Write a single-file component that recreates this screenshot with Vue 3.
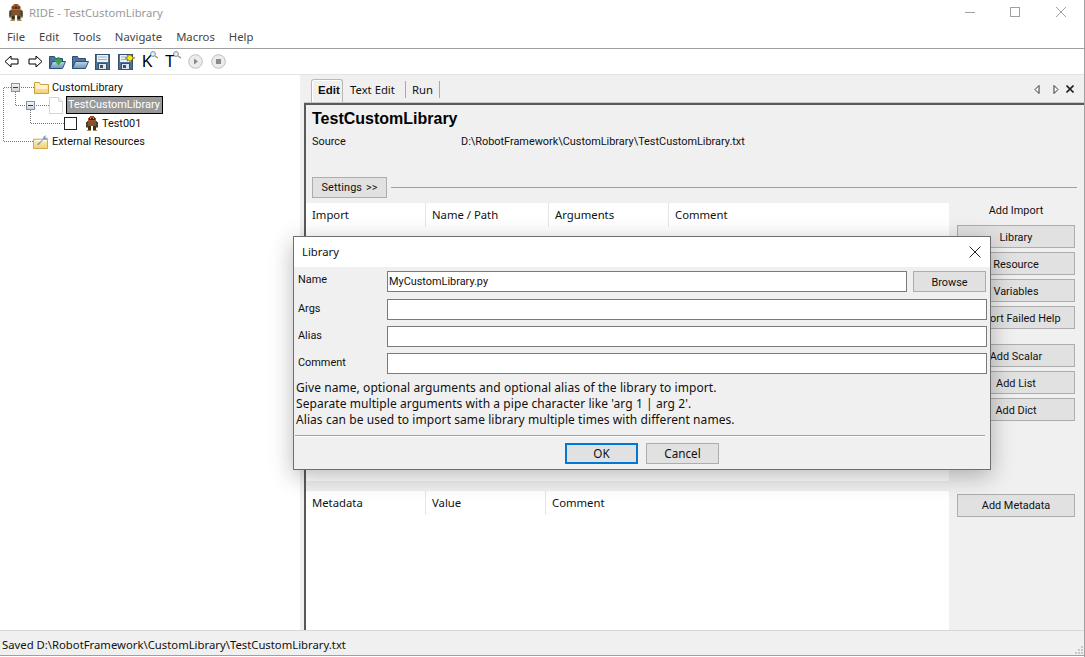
<script setup>
const menus = ['File', 'Edit', 'Tools', 'Navigate', 'Macros', 'Help']
const importButtons = ['Library', 'Resource', 'Variables', 'Import Failed Help']
const varButtons = ['Add Scalar', 'Add List', 'Add Dict']
const helpLines = [
  'Give name, optional arguments and optional alias of the library to import.',
  "Separate multiple arguments with a pipe character like 'arg 1 | arg 2'.",
  'Alias can be used to import same library multiple times with different names.'
]
</script>

<template>
  <div class="app">
    <svg width="0" height="0" class="defs">
      <defs>
        <linearGradient id="blueFolder" x1="0" y1="0" x2="0" y2="1">
          <stop offset="0" stop-color="#c4d6e6" />
          <stop offset="1" stop-color="#6d92b4" />
        </linearGradient>
        <linearGradient id="yellowFolder" x1="0" y1="0" x2="0" y2="1">
          <stop offset="0" stop-color="#fff3c4" />
          <stop offset="1" stop-color="#f4cf6c" />
        </linearGradient>
        <g id="robot">
          <path d="M5 0h4v1h1v1h1v3H3V2h1V1h1z" fill="#a8502c" />
          <path d="M4 2h6v2H4z" fill="#3a2414" />
          <path d="M5 2h1v1H5zM8 2h1v1H8z" fill="#d8a050" />
          <path d="M2 5h10v5H2z" fill="#6e5a34" />
          <path d="M5 6h4v3H5z" fill="#9b4a28" />
          <path d="M1 6h2v6H1zM11 6h2v6h-2z" fill="#4d4024" />
          <path d="M1 11h2v1H1zM11 11h2v1h-2z" fill="#b89a5a" />
          <path d="M3 10h3v4H3zM8 10h3v4H8z" fill="#3e2e1a" />
          <path d="M2 14h4v1H2zM8 14h4v1H8z" fill="#a88c50" />
        </g>
      </defs>
    </svg>

    <header class="titlebar">
      <svg class="robot title-robot" viewBox="0 0 14 15"><use href="#robot" /></svg>
      <span class="title-text">RIDE - TestCustomLibrary</span>
      <div class="winbtns">
        <svg width="10" height="10" viewBox="0 0 10 10"><path d="M0 5.500h10" stroke="#a0a0a0" fill="none" /></svg>
        <svg width="10" height="10" viewBox="0 0 10 10"><rect x=".5" y=".5" width="9" height="9" stroke="#a0a0a0" fill="none" /></svg>
        <svg class="win-x" width="10" height="10" viewBox="0 0 10 10"><path d="M0 0l10 10M10 0L0 10" stroke="#a0a0a0" fill="none" /></svg>
      </div>
    </header>

    <nav class="menubar">
      <span v-for="m in menus" :key="m" class="menu-item">{{ m }}</span>
    </nav>

    <div class="toolbar">
      <svg class="tool arrow" viewBox="0 0 15 13"><path d="M1 6.500L7 1v3h7v5H7v3z" fill="#fff" stroke="#000" /></svg>
      <svg class="tool arrow a2" viewBox="0 0 15 13"><path d="M14 6.500L8 1v3H1v5h7v3z" fill="#fff" stroke="#000" /></svg>
      <svg class="tool t3" viewBox="0 0 17 14">
        <path d="M.5 13.500V1.500h5l1 2h7v3" fill="#4f7698" stroke="#2a5077" />
        <path d="M.5 13.500l3-7h13l-3 7z" fill="url(#blueFolder)" stroke="#2a5077" />
        <path d="M9.500 2v5M6.500 5l3 4 3-4" stroke="#35a84a" stroke-width="2" fill="none" />
      </svg>
      <svg class="tool t4" viewBox="0 0 17 14">
        <path d="M.5 13.500V1.500h5l1 2h7v3" fill="#4f7698" stroke="#2a5077" />
        <path d="M.5 13.500l3-7h13l-3 7z" fill="url(#blueFolder)" stroke="#2a5077" />
      </svg>
      <svg class="tool t5" viewBox="0 0 15 16">
        <rect x=".5" y=".5" width="14" height="15" fill="#4f7192" stroke="#35536f" />
        <rect x="2" y="1" width="11" height="7" fill="#eef1f5" />
        <path d="M3 3h9M3 5.500h9" stroke="#9fb0c2" />
        <rect x="3.500" y="9.500" width="8" height="6" fill="#dfe6ee" stroke="#35536f" />
        <rect x="5" y="11" width="3" height="3" fill="#35536f" />
      </svg>
      <svg class="tool t6" viewBox="0 0 17 16">
        <rect x=".5" y=".5" width="14" height="15" fill="#4f7192" stroke="#35536f" />
        <rect x="2" y="1" width="11" height="7" fill="#eef1f5" />
        <path d="M3 3h9M3 5.500h9" stroke="#9fb0c2" />
        <rect x="3.500" y="9.500" width="8" height="6" fill="#dfe6ee" stroke="#35536f" />
        <rect x="5" y="11" width="3" height="3" fill="#35536f" />
        <path d="M12 0l1 2 2-1-1 2 3 1-3 1 1 2-2-1-1 2-1-2-2 1 1-2-3-1 3-1-1-2 2 1z" fill="#ffee00" stroke="#222" stroke-width=".4" />
      </svg>
      <span class="tool-letter l1">K<svg class="lens" viewBox="0 0 8 8"><circle cx="3" cy="3" r="2.400" fill="#e8f2fa" stroke="#6d8fac" /><path d="M5 5l3 2" stroke="#b08a4a" stroke-width="1.300" /></svg></span>
      <span class="tool-letter l2">T<svg class="lens" viewBox="0 0 8 8"><circle cx="3" cy="3" r="2.400" fill="#e8f2fa" stroke="#6d8fac" /><path d="M5 5l3 2" stroke="#b08a4a" stroke-width="1.300" /></svg></span>
      <svg class="tool round r1" viewBox="0 0 15 15">
        <circle cx="7.500" cy="7.500" r="6.800" fill="#ececec" stroke="#bdbdbd" />
        <path d="M6 4.500l4 3-4 3z" fill="#8a8a8a" />
      </svg>
      <svg class="tool round r2" viewBox="0 0 15 15">
        <circle cx="7.500" cy="7.500" r="6.800" fill="#ececec" stroke="#bdbdbd" />
        <rect x="5" y="5" width="5" height="5" fill="#8a8a8a" />
      </svg>
    </div>

    <main class="main">
      <aside class="tree">
        <svg class="tree-lines" width="100" height="80" shape-rendering="crispEdges">
          <path d="M3.500 12.500h8M3.500 12.500v54h30M15.500 16.500v14h11M30.500 34.500v14h34M19 12.500h15M34 30.500h15" stroke="#777" stroke-dasharray="1 1" fill="none" />
        </svg>
        <div class="tree-row row-root">
          <span class="expander"></span>
          <svg class="folder" viewBox="0 0 15 13"><path d="M.5 12.500v-11h5l1 2h8v9z" fill="url(#yellowFolder)" stroke="#c9a243" /><path d="M2 5h11M2 7h11" stroke="#fff" /></svg>
          <span class="node-label">CustomLibrary</span>
        </div>
        <div class="tree-row row-file">
          <span class="expander"></span>
          <svg class="file" viewBox="0 0 14 17"><path d="M.5.500h9l4 4v12H.5z" fill="#fff" stroke="#d4d4d4" /><path d="M9.500.500v4h4" fill="none" stroke="#d4d4d4" /></svg>
          <span class="node-label selected">TestCustomLibrary</span>
        </div>
        <div class="tree-row row-test">
          <span class="checkbox"></span>
          <svg class="robot" viewBox="0 0 14 15"><use href="#robot" /></svg>
          <span class="node-label">Test001</span>
        </div>
        <div class="tree-row row-ext">
          <svg class="folder-ext" viewBox="0 0 17 16"><path d="M.5 15.500v-10h15v10z" fill="url(#yellowFolder)" stroke="#c9a243" /><path d="M3 7h11" stroke="#fff" /><path d="M4 11l6-5 1-3 3-2-1 3 3 0-2 2-3 0-5 6z" fill="#8aa0b8" /></svg>
          <span class="node-label">External Resources</span>
        </div>
      </aside>

      <div class="sash"></div>

      <section class="notebook">
        <div class="tabs">
          <span class="tab active">Edit</span>
          <span class="tab t-text">Text Edit</span>
          <span class="tab t-run">Run</span>
          <div class="tab-nav">
            <svg class="nav-l" width="6" height="9" viewBox="0 0 6 9"><path d="M5 .500L1 4.500l4 4z" fill="#fff" stroke="#333" /></svg>
            <svg class="nav-r" width="6" height="9" viewBox="0 0 6 9"><path d="M1 .500l4 4-4 4z" fill="#fff" stroke="#333" /></svg>
            <svg class="nav-x" width="8" height="8" viewBox="0 0 8 8"><path d="M.500.500l7 7M7.500.500l-7 7" stroke="#222" stroke-width="1.600" /></svg>
          </div>
        </div>

        <div class="page">
          <div class="page-left">
            <h1 class="page-title">TestCustomLibrary</h1>
            <div class="source-row">
              <span class="source-label">Source</span>
              <span>D:\RobotFramework\CustomLibrary\TestCustomLibrary.txt</span>
            </div>
            <div class="settings-row">
              <button class="btn settings">Settings &gt;&gt;</button>
              <span class="settings-line"></span>
            </div>
            <div class="grid grid-imports">
              <div class="grid-head">
                <span class="col c1">Import</span>
                <span class="col c2">Name / Path</span>
                <span class="col c3">Arguments</span>
                <span class="col c4">Comment</span>
              </div>
            </div>
            <div class="band"></div>
            <div class="grid grid-meta">
              <div class="grid-head">
                <span class="col c1">Metadata</span>
                <span class="col c2">Value</span>
                <span class="col c5">Comment</span>
              </div>
            </div>
          </div>

          <div class="actions">
            <div class="actions-title">Add Import</div>
            <div class="btn-stack">
              <button v-for="b in importButtons" :key="b" class="btn act">{{ b }}</button>
            </div>
            <div class="btn-stack second">
              <button v-for="b in varButtons" :key="b" class="btn act">{{ b }}</button>
            </div>
            <button class="btn act meta-btn">Add Metadata</button>
          </div>
        </div>
      </section>
    </main>

    <footer class="status">
      <span>Saved D:\RobotFramework\CustomLibrary\TestCustomLibrary.txt</span>
      <svg class="grip" width="9" height="9" viewBox="0 0 9 9"><path d="M7 1h2v2H7zM4 4h2v2H4zM7 4h2v2H7zM1 7h2v2H1zM4 7h2v2H4zM7 7h2v2H7z" fill="#c8c8c8" /></svg>
    </footer>

    <div class="dialog">
      <div class="dlg-title">
        <span>Library</span>
        <svg width="12" height="12" viewBox="0 0 12 12"><path d="M.5.500l11 11M11.500.500l-11 11" stroke="#222" fill="none" /></svg>
      </div>
      <div class="dlg-body">
        <div class="field name-field">
          <label>Name</label>
          <div class="input">MyCustomLibrary.py</div>
          <button class="btn browse">Browse</button>
        </div>
        <div class="field">
          <label>Args</label>
          <div class="input"></div>
        </div>
        <div class="field">
          <label>Alias</label>
          <div class="input"></div>
        </div>
        <div class="field">
          <label>Comment</label>
          <div class="input"></div>
        </div>
        <div class="help">
          <div v-for="l in helpLines" :key="l">{{ l }}</div>
        </div>
        <div class="dlg-sep"></div>
        <div class="dlg-buttons">
          <button class="btn dlg-btn ok">OK</button>
          <button class="btn dlg-btn">Cancel</button>
        </div>
      </div>
    </div>
  </div>
</template>

<style>
html, body { margin: 0; padding: 0; background: #fff; }
</style>

<style scoped>
.app {
  position: relative;
  width: 1085px;
  height: 657px;
  overflow: hidden;
  background: #fff;
  display: flex;
  flex-direction: column;
  font-family: Roboto, "Noto Sans", sans-serif;
  font-size: 10.9px;
  color: #111;
  box-sizing: border-box;
  border-right: 1px solid #a0a0a0;
}
.defs { position: absolute; }
.titlebar {
  height: 27px;
  display: flex;
  align-items: center;
  padding-left: 8px;
  flex: none;
}
.robot { width: 14px; height: 15px; display: block; }
.title-robot { width: 16px; height: 17px; margin-top: -3px; }
.title-text {
  margin-left: 5px;
  color: #999;
  margin-top: -2px;
  font-family: "Noto Sans", sans-serif;
  font-size: 11.25px;
}
.winbtns {
  margin-left: auto;
  display: flex;
  gap: 35px;
  padding-right: 18px;
  margin-top: -3px;
}
.win-x { margin-left: 1px; }
.menubar {
  height: 21px;
  display: flex;
  align-items: flex-start;
  padding-left: 7px;
  color: #444;
  border-bottom: 1px solid #a0a0a0;
  flex: none;
  font-family: "Noto Sans", sans-serif;
  font-size: 11.3px;
}
.menu-item { margin-right: 14px; line-height: 20px; }
.toolbar {
  height: 25px;
  flex: none;
  display: flex;
  align-items: center;
  padding-left: 4px;
  border-bottom: 1px solid #e3e3e3;
}
.tool { display: block; flex: none; }
.arrow { width: 15px; height: 13px; }
.a2 { margin-left: 9px; }
.t3 { width: 17px; height: 14px; margin-left: 6px; }
.t4 { width: 17px; height: 14px; margin-left: 6px; }
.t5 { width: 15px; height: 16px; margin-left: 6px; }
.t6 { width: 17px; height: 16px; margin-left: 8px; }
.tool-letter {
  position: relative;
  font-family: "Liberation Sans", sans-serif;
  font-size: 16px;
  color: #000;
  width: 15px;
  line-height: 16px;
  flex: none;
}
.l1 { margin-left: 7px; }
.l2 { margin-left: 8px; width: 16px; }
.lens { position: absolute; left: 8px; top: -3px; width: 8px; height: 8px; }
.round { width: 15px; height: 15px; }
.r1 { margin-left: 7px; }
.r2 { margin-left: 8px; }

.main { flex: 1; display: flex; min-height: 0; }
.tree {
  position: relative;
  width: 300px;
  flex: none;
  padding-top: 3px;
  box-sizing: border-box;
}
.tree-lines { position: absolute; left: 0; top: 0; }
.tree-row {
  position: relative;
  height: 18px;
  display: flex;
  align-items: center;
}
.expander {
  position: relative;
  width: 7px;
  height: 7px;
  border: 1px solid #8094b0;
  background: linear-gradient(#f4f4f4, #d4d4d8);
  flex: none;
}
.expander::before {
  content: "";
  position: absolute;
  left: 1px;
  top: 3px;
  width: 5px;
  height: 1px;
  background: #2a3f6a;
}
.row-root { padding-left: 11px; }
.row-root .folder { margin-left: 14px; }
.folder { width: 15px; height: 13px; flex: none; }
.node-label { white-space: nowrap; }
.row-root .node-label { margin-left: 3px; }
.row-file { padding-left: 26px; }
.file { width: 14px; height: 17px; margin-left: 14px; flex: none; }
.selected {
  margin-left: 3px;
  background: #999;
  color: #fff;
  border: 1px solid #000;
  height: 16px;
  line-height: 16px;
  padding: 0 2px 0 1px;
}
.row-test { padding-left: 64px; }
.checkbox {
  width: 11px;
  height: 11px;
  border: 1px solid #222;
  background: #fff;
  flex: none;
}
.row-test .robot { margin-left: 8px; }
.row-test .node-label { margin-left: 3px; }
.row-ext { padding-left: 33px; }
.folder-ext { width: 16px; height: 15px; flex: none; }
.row-ext .node-label { margin-left: 3px; }
.sash { width: 4px; flex: none; background: #f0f0f0; }

.notebook { flex: 1; min-width: 0; display: flex; flex-direction: column; background: #f0f0f0; }
.tabs {
  height: 28px;
  flex: none;
  display: flex;
  align-items: flex-end;
  padding: 0 10px 0 7px;
  box-sizing: border-box;
  border-bottom: 1px solid #c8c8c8;
  font-family: "Noto Sans", sans-serif;
  font-size: 11.3px;
}
.tab {
  height: 17px;
  line-height: 17px;
  margin-bottom: 4px;
  border-right: 1px solid #a8a8a8;
  box-sizing: content-box;
}
.tab.active {
  font-weight: 700;
  font-family: "Liberation Sans", sans-serif;
  font-size: 11.5px;
  background: #f0f0f0;
  border: 1px solid #b8b8b8;
  border-bottom: none;
  border-radius: 3px 3px 0 0;
  box-shadow: inset 1px 1px 0 #fff;
  padding-left: 6px;
  width: 24px;
  height: 22px;
  line-height: 21px;
  margin-bottom: 0;
  flex: none;
  box-sizing: content-box;
}
.t-text { padding-left: 7px; width: 55px; }
.t-run { padding-left: 6px; width: 27px; }
.tab-nav {
  margin-left: auto;
  display: flex;
  height: 24px;
  align-items: center;
  align-self: flex-start;
  margin-top: 2px;
}
.nav-r { margin-left: 13px; }
.nav-x { margin-left: 7px; }
.page {
  flex: 1;
  display: flex;
  min-height: 0;
  border-left: 2px solid #5a5a5a;
  border-top: 2px solid #5a5a5a;
}
.page-left { width: 643px; flex: none; display: flex; flex-direction: column; }
.page-title {
  margin: 0;
  font-family: "Liberation Sans", sans-serif;
  font-size: 16px;
  font-weight: 700;
  color: #000;
  padding: 4px 0 0 6px;
  line-height: 20px;
}
.source-row {
  display: flex;
  padding: 5px 0 0 6px;
  height: 18px;
  line-height: 16px;
}
.source-label { width: 149px; flex: none; }
.settings-row {
  display: flex;
  align-items: center;
  margin-top: 25px;
  padding-left: 6px;
  width: 765px;
  flex: none;
}
.settings { width: 75px; height: 21px; flex: none; font-family: "Noto Sans", sans-serif; font-size: 11.3px; letter-spacing: .1px; word-spacing: 1px; padding-right: 2px; }
.settings-line { flex: 1; height: 1px; background: #a0a0a0; margin-left: 4px; }
.grid { background: #fff; }
.grid-imports { height: 278px; margin-top: 5px; flex: none; }
.band { height: 10px; flex: none; }
.grid-meta { flex: 1; }
.grid-head {
  display: flex;
  height: 24px;
  background: #fff;
  font-family: "Noto Sans", sans-serif;
  font-size: 11.3px;
}
.col { border-right: 1px solid #e6e6e6; padding-left: 6px; line-height: 23px; box-sizing: border-box; }
.c1 { width: 120px; }
.c2 { width: 123px; }
.c3 { width: 120px; }
.c4 { width: 100px; border-right: none; }
.c5 { width: 100px; border-right: none; }
.grid-meta .c2 { width: 120px; }

.actions {
  flex: 1;
  display: flex;
  flex-direction: column;
  align-items: flex-start;
  padding-left: 8px;
}
.actions-title { width: 118px; text-align: center; margin-top: 97px; line-height: 18px; margin-bottom: 5px; }
.btn {
  font: inherit;
  color: #111;
  background: #e1e1e1;
  border: 1px solid #adadad;
  padding: 0;
  box-sizing: border-box;
  display: block;
  white-space: nowrap;
}
.btn-stack { display: flex; flex-direction: column; gap: 4px; }
.second { margin-top: 15px; }
.act { width: 118px; height: 23px; padding-top: 2px; }
.meta-btn { margin-top: 73px; padding-top: 0; }

.status {
  height: 26px;
  margin-bottom: 1px;
  flex: none;
  display: flex;
  align-items: center;
  background: #f0f0f0;
  border-top: 1px solid #d8d8d8;
  border-bottom: 1px solid #a0a0a0;
  padding: 2px 0 0 2px;
  box-sizing: border-box;
  position: relative;
  font-family: "Noto Sans", sans-serif;
  font-size: 11.3px;
}
.grip { position: absolute; right: 1px; bottom: 1px; }

.dialog {
  position: absolute;
  left: 293px;
  top: 236px;
  width: 698px;
  height: 234px;
  box-sizing: border-box;
  border: 1px solid #6e6e6e;
  background: #f0f0f0;
  box-shadow: 0 6px 22px rgba(0, 0, 0, .28);
  display: flex;
  flex-direction: column;
}
.dlg-title {
  height: 30px;
  flex: none;
  background: #fff;
  display: flex;
  align-items: center;
  justify-content: space-between;
  padding: 0 9px 2px 8px;
  box-sizing: border-box;
  font-family: "Noto Sans", sans-serif;
  font-size: 11.3px;
}
.dlg-title svg { margin-top: 2px; }
.dlg-body { flex: 1; padding: 4px 3px 0 4px; display: flex; flex-direction: column; }
.field { display: flex; height: 21px; margin-bottom: 6px; }
.name-field { margin-bottom: 7px; }
.field label { width: 89px; flex: none; line-height: 18px; }
.field:not(.name-field) label { line-height: 19px; }
.input {
  flex: 1;
  border: 1px solid #7a7a7a;
  background: #fff;
  box-sizing: border-box;
  padding-left: 1px;
  line-height: 19px;
}
.browse { width: 73px; height: 21px; margin: 0 1px 0 6px; flex: none; padding-top: 2px; }
.help {
  margin: 0 0 0 -2px;
  line-height: 16px;
  font-family: "Noto Sans", sans-serif;
  font-size: 12px;
  letter-spacing: .07px;
}
.dlg-sep { height: 1px; background: #a0a0a0; border-bottom: 1px solid #fff; margin: 7px 2px 0 -3px; }
.dlg-buttons { display: flex; justify-content: flex-start; gap: 8px; padding: 6px 0 0 267px; }
.dlg-btn { width: 73px; height: 21px; font-family: "Noto Sans", sans-serif; font-size: 11.7px; padding-bottom: 2px; }
.ok { border: 2px solid #0078d7; }
</style>
